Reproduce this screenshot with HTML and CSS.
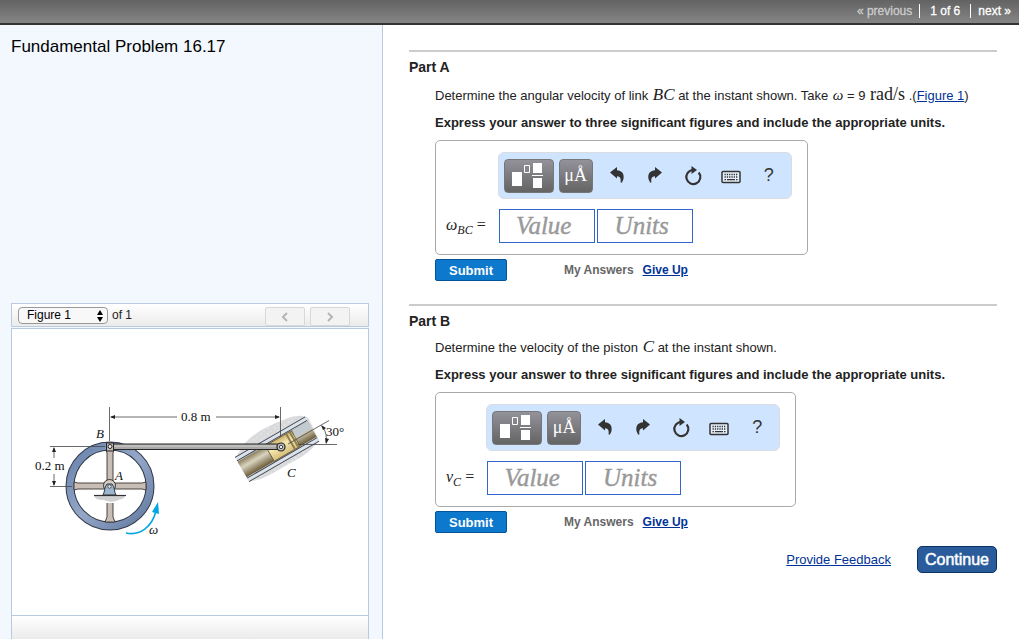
FILE: index.html
```html
<!DOCTYPE html>
<html lang="en">
<head>
    <meta charset="UTF-8">
    <meta name="viewport" content="width=device-width, initial-scale=1.0">
    <title>Fundamental Problem 16.17</title>
    <link rel="stylesheet" href="styles.css">
</head>
<body>
    <!-- shared toolbar icons -->
    <svg class="icon-defs" aria-hidden="true">
        <symbol id="i-template" viewBox="0 0 50 34">
            <path fill="#fff" d="M8 13h10v14H8zM29 4h9v10h-9zM29 19h9v10h-9zM28 16h11v1H28z"/>
            <path fill="none" stroke="#fff" d="M20.500 6.500h5v7h-5z"/>
        </symbol>
        <symbol id="i-undo" viewBox="0 0 16 18">
            <path fill="#333" d="M1 5.500 8 0v3.200c4.500.3 7.500 3 6.500 8.800l-1.500 3.500h-1.500c.8-4-.3-6-3.500-6.300v2.300z"/>
        </symbol>
        <symbol id="i-redo" viewBox="0 0 16 18">
            <path fill="#333" d="M15 5.500 8 0v3.200c-4.500.3-7.500 3-6.500 8.800l1.500 3.500h1.500c-.8-4 .3-6 3.500-6.300v2.300z"/>
        </symbol>
        <symbol id="i-reset" viewBox="0 0 20 20">
            <path fill="none" stroke="#333" stroke-width="2.200" d="M10 4A7 7 0 1 0 15.700 6.500"/>
            <path fill="#333" d="M8.500 0 14 4 8.500 8z"/>
        </symbol>
        <symbol id="i-keyboard" viewBox="0 0 20 18">
            <rect x="1" y="4.500" width="18" height="11" rx="1" fill="#e6effa" stroke="#333" stroke-width="1.500"/>
            <path stroke="#333" stroke-width="1.300" stroke-dasharray="1.300 1" d="M3.500 7.500h13M3.500 10h13"/>
            <path stroke="#333" stroke-width="1.300" d="M3.500 12.700h1.500M6 12.700h8M15 12.700h1.500"/>
        </symbol>
    </svg>

    <header class="topbar">
        <span class="prev">« previous</span>
        <span class="count">1 of 6</span>
        <a class="next" href="#">next »</a>
    </header>

    <div class="page">
        <aside class="sidebar">
            <h1>Fundamental Problem 16.17</h1>
            <div class="figure-bar">
                <div class="figure-select">
                    <select id="figure" aria-label="Figure">
                        <option>Figure 1</option>
                    </select>
                    <svg width="8" height="12" viewBox="0 0 8 12"><path d="M4 0 7 5H1zM4 12 1 7h6z"/></svg>
                </div>
                <label for="figure">of 1</label>
                <div class="figure-nav">
                    <button type="button" aria-label="Previous figure" disabled><svg width="8" height="10" viewBox="0 0 8 10"><path d="M6 1 2 5l4 4"/></svg></button>
                    <button type="button" aria-label="Next figure" disabled><svg width="8" height="10" viewBox="0 0 8 10"><path d="m2 1 4 4-4 4"/></svg></button>
                </div>
            </div>
            <div class="figure-body">
                <svg class="diagram" viewBox="12 329 356 286" role="img" aria-label="Wheel A drives piston C through link B C">
                    <defs>
                        <linearGradient id="rim" x1="0" y1="0" x2="1" y2="1">
                            <stop offset="0" stop-color="#6680ab"/>
                            <stop offset=".5" stop-color="#94a7c8"/>
                            <stop offset="1" stop-color="#60789f"/>
                        </linearGradient>
                        <linearGradient id="bore" x1="0" y1="0" x2="0" y2="1">
                            <stop offset="0" stop-color="#8a7d5c"/>
                            <stop offset=".4" stop-color="#d9d4c0"/>
                            <stop offset="1" stop-color="#6b5b36"/>
                        </linearGradient>
                        <linearGradient id="brass" x1="0" y1="0" x2="0" y2="1">
                            <stop offset="0" stop-color="#c9b06a"/>
                            <stop offset=".4" stop-color="#f6e8b0"/>
                            <stop offset="1" stop-color="#d5bd78"/>
                        </linearGradient>
                        <pattern id="speckle" width="7" height="6" patternUnits="userSpaceOnUse">
                            <rect width="7" height="6" fill="#d9dadc"/>
                            <circle cx="2" cy="2" r=".7" fill="#f7f7f7"/>
                            <circle cx="5" cy="5" r=".6" fill="#f7f7f7"/>
                        </pattern>
                    </defs>

                    <!-- cylinder and piston -->
                    <path fill="url(#speckle)" d="M237 456C245 437 263 428 283 420C294 415 305 414 309 419L319 440C310 454 297 459 285 466C272 474 260 481 250 481z"/>
                    <g transform="translate(281 447) rotate(-30)">
                        <path fill="#dbe3ea" d="M-45-14H36V14H-45z"/>
                        <path fill="url(#bore)" d="M-45-9H36V9H-45z"/>
                        <path fill="#c2ccd0" d="M18-9H36V-1H18z"/>
                        <path fill="url(#brass)" stroke="#55482a" stroke-width=".7" d="M-13-9H17V9H-13z"/>
                        <path stroke="#8f7d52" stroke-width="2" d="M11-9V9M15-9V9"/>
                        <path stroke="#41424f" stroke-width=".9" d="M-45-14H36M-45-10H36M-45 10H36M-45 14H36"/>
                    </g>

                    <!-- wheel -->
                    <circle cx="110" cy="486" r="40" fill="none" stroke="#333a48" stroke-width="9"/>
                    <circle cx="110" cy="486" r="40" fill="none" stroke="url(#rim)" stroke-width="7"/>
                    <path fill="#c8beb5" stroke="#39332f" stroke-width=".9" d="M106 450h8l-1 3v64l2 5h-10l2-5v-64zM74 482l4 1h64l4-1v8l-4-1H78l-4 1z"/>
                    <path fill="#fff" d="M98 495h24v8H98z"/>
                    <path fill="#d0d1d2" d="M94 496h31c-1 4-6 3-9 5-4 1-8 1-12-1-4 0-8 0-10-4z"/>
                    <circle cx="109.500" cy="485.500" r="6" fill="#d4cbc3" stroke="#39332f"/>
                    <path fill="#9db4cf" stroke="#2c3643" d="M103 495c2-3 1-8 4-11h5c3 3 2 8 4 11z"/>
                    <path stroke="#333" stroke-width="1.200" d="M94 495.500h32"/>
                    <circle cx="109.500" cy="486.500" r="1.700" fill="#eee" stroke="#333" stroke-width=".8"/>

                    <!-- link BC -->
                    <path fill="#a9a8a7" stroke="#252525" d="M107 444h174v5.500H107z"/>
                    <path stroke="#d3d3d2" stroke-width="1.200" d="M114 446h162"/>
                    <path fill="#c5bdb5" stroke="#252525" d="M106.500 443h7v8h-7z"/>
                    <circle cx="110" cy="446.500" r="2" fill="#eee" stroke="#222"/>
                    <circle cx="281" cy="447" r="4" fill="#bcbcba" stroke="#222" stroke-width="1.200"/>
                    <circle cx="281" cy="447" r="1.700" fill="#eee" stroke="#222" stroke-width=".8"/>

                    <!-- dimensions -->
                    <path fill="none" stroke="#444" stroke-width=".8" d="M109.500 407v34M280.500 407v30M111 417h66M216 417h63M50 446.500h55M50 486.500h22M54 448v10M54 474v11M288 444l41-23.500M298 444.500h39M322 426c4 5 5 11 4 17"/>
                    <path fill="#222" d="m110 417 5-2v4zM280 417l-5-2v4zM54 447l-2 5h4zM54 486l-2-5h4zM321 425l2 5 3-2zM326 444l-1-6 4 1z"/>
                    <path fill="none" stroke="#00a7e1" stroke-width="1.600" d="M126 533c14 3 26-6 30-22"/>
                    <path fill="#00a7e1" d="m158 502 1 12-7-2z"/>

                    <g class="diagram-text">
                        <text x="181" y="421">0.8 m</text>
                        <text x="35" y="470">0.2 m</text>
                        <text x="326" y="436">30°</text>
                        <text x="96" y="438" font-style="italic">B</text>
                        <text x="115" y="480" font-style="italic">A</text>
                        <text x="287" y="477" font-style="italic">C</text>
                        <text x="149" y="534" font-style="italic">ω</text>
                    </g>
                </svg>
            </div>
            <div class="figure-foot"></div>
        </aside>

        <main class="content">
            <section class="part">
                <h2>Part A</h2>
                <div class="part-body">
                    <p class="question">Determine the angular velocity of link <i class="math">BC</i> at the instant shown. Take <i class="math small">ω</i> = 9 <span class="math unit">rad/s</span> .(<a href="#figure">Figure 1</a>)</p>
                    <p class="instruction">Express your answer to three significant figures and include the appropriate units.</p>
                    <form class="answer">
                        <div class="toolbar">
                            <button type="button" class="tool wide" aria-label="Templates"><svg width="50" height="34"><use href="#i-template"/></svg></button>
                            <button type="button" class="tool">μÅ</button>
                            <button type="button" class="plain" aria-label="Undo"><svg width="16" height="18"><use href="#i-undo"/></svg></button>
                            <button type="button" class="plain" aria-label="Redo"><svg width="16" height="18"><use href="#i-redo"/></svg></button>
                            <button type="button" class="plain" aria-label="Reset"><svg width="20" height="20"><use href="#i-reset"/></svg></button>
                            <button type="button" class="plain" aria-label="Keyboard"><svg width="20" height="18"><use href="#i-keyboard"/></svg></button>
                            <button type="button" class="plain">?</button>
                        </div>
                        <label for="value-a"><i>ω<sub>BC</sub></i> =</label>
                        <div class="fields">
                            <input type="text" id="value-a" placeholder="Value">
                            <input type="text" aria-label="Units" placeholder="Units">
                        </div>
                    </form>
                    <div class="actions">
                        <button type="submit" class="submit">Submit</button>
                        <span>My Answers</span>
                        <a href="#">Give Up</a>
                    </div>
                </div>
            </section>

            <section class="part">
                <h2>Part B</h2>
                <div class="part-body">
                    <p class="question">Determine the velocity of the piston <i class="math">C</i> at the instant shown.</p>
                    <p class="instruction">Express your answer to three significant figures and include the appropriate units.</p>
                    <form class="answer">
                        <div class="toolbar">
                            <button type="button" class="tool wide" aria-label="Templates"><svg width="50" height="34"><use href="#i-template"/></svg></button>
                            <button type="button" class="tool">μÅ</button>
                            <button type="button" class="plain" aria-label="Undo"><svg width="16" height="18"><use href="#i-undo"/></svg></button>
                            <button type="button" class="plain" aria-label="Redo"><svg width="16" height="18"><use href="#i-redo"/></svg></button>
                            <button type="button" class="plain" aria-label="Reset"><svg width="20" height="20"><use href="#i-reset"/></svg></button>
                            <button type="button" class="plain" aria-label="Keyboard"><svg width="20" height="18"><use href="#i-keyboard"/></svg></button>
                            <button type="button" class="plain">?</button>
                        </div>
                        <label for="value-b"><i>v<sub>C</sub></i> =</label>
                        <div class="fields">
                            <input type="text" id="value-b" placeholder="Value">
                            <input type="text" aria-label="Units" placeholder="Units">
                        </div>
                    </form>
                    <div class="actions">
                        <button type="submit" class="submit">Submit</button>
                        <span>My Answers</span>
                        <a href="#">Give Up</a>
                    </div>
                </div>
            </section>

            <div class="page-actions">
                <a href="#">Provide Feedback</a>
                <button type="button" class="continue">Continue</button>
            </div>
        </main>
    </div>
</body>
</html>
```

FILE: styles.css
```css
* {
    box-sizing: border-box;
}
body {
    margin: 0;
    min-height: 100vh;
    display: flex;
    flex-direction: column;
    font-family: "Liberation Sans", Arial, sans-serif;
    font-size: 13px;
    color: #222;
    background: #fff;
}
button, input, select {
    font-family: inherit;
    margin: 0;
}
button {
    padding: 0;
    cursor: pointer;
}
a {
    color: #039;
}
.icon-defs {
    display: none;
}

/* Top bar */
.topbar {
    height: 25px;
    display: flex;
    justify-content: flex-end;
    align-items: center;
    padding: 0 8px 1px 0;
    background: linear-gradient(#636363, #858585);
    border-bottom: 2px solid #333;
    font-size: 12px;
    line-height: 14px;
    -webkit-text-stroke: 0.3px;
}
.topbar .prev {
    color: #ccc;
    padding-right: 7px;
}
.topbar .count {
    color: #fff;
    padding: 0 10px;
    border-left: 1px solid #fff;
    border-right: 1px solid #fff;
}
.topbar .next {
    color: #fff;
    padding-left: 7px;
    text-decoration: none;
}

.page {
    flex: 1;
    display: flex;
}

/* Left column */
.sidebar {
    flex: 0 0 383px;
    display: flex;
    flex-direction: column;
    padding: 0 13px 0 11px;
    background: #f3f8ff;
    border-right: 1px solid #b7cade;
}
.sidebar h1 {
    flex: 1;
    margin: 0;
    padding-top: 12px;
    font-size: 17px;
    line-height: 20px;
    font-weight: normal;
    color: #000;
}
.figure-bar {
    height: 24px;
    display: flex;
    align-items: center;
    gap: 4px;
    padding: 0 18px 0 6px;
    border: 1px solid #b7cade;
    background: linear-gradient(#fff, #ebebeb);
    font-size: 12px;
}
.figure-select {
    position: relative;
}
.figure-select select {
    display: block;
    width: 90px;
    height: 17px;
    padding: 0 8px;
    appearance: none;
    border: 1px solid #999;
    border-radius: 4px;
    background: #f8f8f8;
    font-size: 12px;
    color: #000;
}
.figure-select svg {
    position: absolute;
    right: 4px;
    top: 3px;
    pointer-events: none;
}
.figure-nav {
    margin-left: auto;
    display: flex;
    gap: 5px;
    align-self: flex-end;
}
.figure-nav button {
    width: 40px;
    height: 19px;
    border: 1px solid #d8d8d8;
    border-radius: 2px;
    background: #f3f3f3;
}
.figure-nav svg {
    display: block;
    margin: auto;
    fill: none;
    stroke: #b5b5b5;
    stroke-width: 2;
}
.figure-body {
    margin-top: 1px;
    border: 1px solid #b7cade;
    background: #fff;
}
.diagram {
    display: block;
    width: 100%;
}
.diagram-text {
    font-family: "Liberation Serif", "Times New Roman", serif;
    font-size: 13px;
    fill: #111;
}
.figure-foot {
    height: 23px;
    border: 1px solid #b7cade;
    border-width: 0 1px;
    background: linear-gradient(#fff, #ebebeb);
}

/* Right column */
.content {
    flex: 1;
    padding: 25px 22px 0 26px;
}
.part {
    border-top: 2px solid #ccc;
    padding-bottom: 23px;
}
.part h2 {
    margin: 0;
    padding-top: 7px;
    font-size: 14px;
    line-height: 16px;
}
.part-body {
    padding-left: 26px;
}
.question, .instruction {
    margin: 0;
    line-height: 18px;
}
.question {
    padding-top: 10px;
}
.instruction {
    padding: 9px 0 8px;
    font-weight: bold;
}
.math {
    margin-left: 1px;
    font-family: "Liberation Serif", "Times New Roman", serif;
    font-size: 17px;
    line-height: 16px;
}
.math.small {
    font-size: 15px;
}
.math.unit {
    font-size: 18px;
    line-height: 18px;
}

/* Answer box */
.answer {
    width: fit-content;
    display: grid;
    grid-template-columns: auto auto;
    align-items: center;
    gap: 10px 12px;
    padding: 11px 15px 11px 10px;
    border: 1px solid #aaa;
    border-radius: 5px;
}
.answer label {
    font-family: "Liberation Serif", "Times New Roman", serif;
    font-size: 16px;
    line-height: 20px;
}
.answer sub {
    font-size: 12px;
    line-height: 12px;
}
.toolbar {
    grid-column: 2;
    display: flex;
    align-items: center;
    height: 47px;
    padding: 0 3px 0 5px;
    background: #cfe5ff;
    border: 1px solid #d9dde3;
    border-radius: 6px;
}
.tool {
    width: 34px;
    height: 34px;
    margin-right: 5px;
    border: 1px solid #777;
    border-radius: 4px;
    background: linear-gradient(#93929a, #646464);
    color: #fff;
    font-family: "Liberation Serif", "Times New Roman", serif;
    font-size: 18px;
}
.tool.wide {
    width: 50px;
}
.tool.wide svg {
    display: block;
    margin: -1px;
}
.plain {
    width: 38px;
    height: 34px;
    border: 0;
    background: none;
    font-size: 18px;
    color: #333;
}
.plain svg {
    display: block;
    margin: auto;
}
.plain:hover {
    background: #bcd9fa;
}
.fields {
    display: flex;
    gap: 2px;
    padding-left: 1px;
}
.fields input {
    width: 96px;
    height: 34px;
    padding: 0 6px 0 0;
    border: 1px solid #36c;
    font-family: "Liberation Serif", "Times New Roman", serif;
    font-size: 25px;
    text-align: center;
}
.fields input::placeholder {
    color: #999;
    font-style: italic;
    -webkit-text-stroke: 0.4px;
}
.actions {
    display: flex;
    align-items: center;
    margin-top: 4px;
    font-size: 12px;
    font-weight: bold;
    color: #666;
}
.actions a {
    margin-left: 9px;
}
.submit {
    width: 72px;
    height: 22px;
    margin-right: 57px;
    border: 1px solid #05539b;
    border-radius: 2px;
    background: #0d79cd;
    color: #fff;
    font-size: 13px;
    font-weight: bold;
}
.page-actions {
    display: flex;
    justify-content: flex-end;
    align-items: center;
    gap: 26px;
    margin-top: -10px;
}
.continue {
    width: 80px;
    height: 27px;
    border: 1px solid #0a3263;
    border-radius: 5px;
    background: #2a5c9c;
    color: #fff;
    font-size: 16px;
    -webkit-text-stroke: 0.5px;
}
```
